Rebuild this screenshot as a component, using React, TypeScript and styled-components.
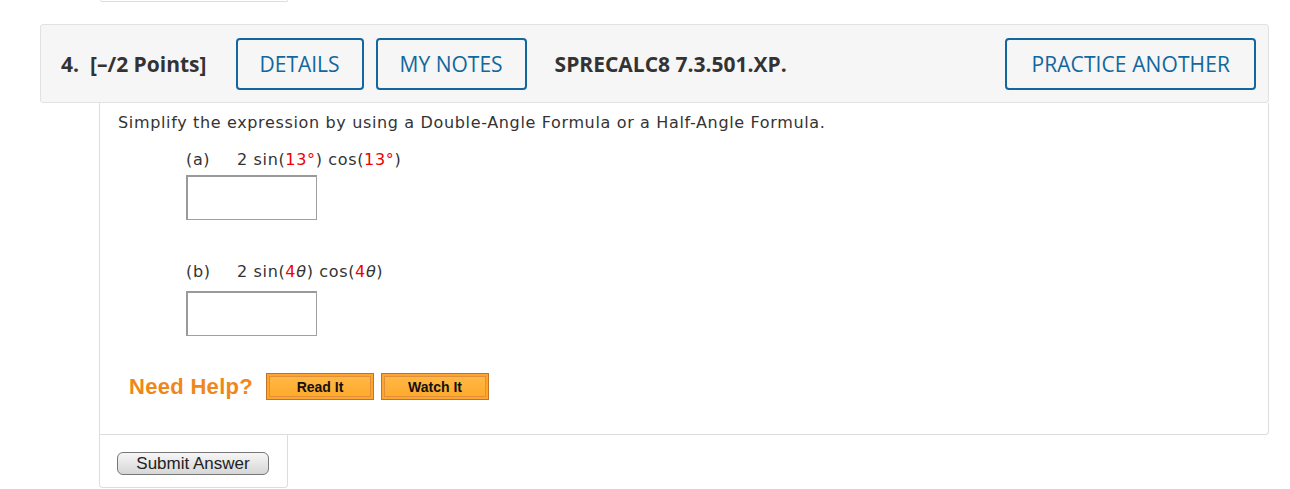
import styled, { createGlobalStyle } from "styled-components"

const Global = createGlobalStyle`
body {
  margin: 0;
  background: #ffffff;
}
`

const App = () => {
  return (
    <Page>
      <Global />
      <PrevTail />
      <Header>
        <Num>4.</Num>
        <Points>[–/2 Points]</Points>
        <OutlineButton first>DETAILS</OutlineButton>
        <OutlineButton>MY NOTES</OutlineButton>
        <Code>SPRECALC8 7.3.501.XP.</Code>
        <Spacer />
        <OutlineButton wide>PRACTICE ANOTHER</OutlineButton>
      </Header>
      <Body>
        <Prompt>Simplify the expression by using a Double-Angle Formula or a Half-Angle Formula.</Prompt>
        <Part>
          <PartRow>
            <Label>(a)</Label>
            <span>
              2 sin(<Red>13°</Red>) cos(<Red>13°</Red>)
            </span>
          </PartRow>
          <Answer gap={3} />
        </Part>
        <Part second>
          <PartRow>
            <Label>(b)</Label>
            <span>
              2 sin(<Red>4</Red><Theta>θ</Theta>) cos(<Red>4</Red><Theta>θ</Theta>)
            </span>
          </PartRow>
          <Answer gap={7} />
        </Part>
        <HelpRow>
          <NeedHelp>Need Help?</NeedHelp>
          <HelpButton>Read It</HelpButton>
          <HelpButton>Watch It</HelpButton>
        </HelpRow>
      </Body>
      <SubmitBox>
        <SubmitButton>Submit Answer</SubmitButton>
      </SubmitBox>
    </Page>
  )
}

export default App

const Page = styled.div`
width: 1229px;
padding-left: 40px;
padding-bottom: 1px;
display: flex;
flex-direction: column;
`
const PrevTail = styled.div`
width: 186px;
height: 1px;
margin-left: 60px;
border: 1px solid #dddddd;
border-top: none;
border-radius: 0 0 3px 3px;
`
const Header = styled.div`
margin-top: 22px;
height: 79px;
box-sizing: border-box;
background: #f6f6f6;
border: 1px solid #e2e2e2;
border-radius: 3px;
display: flex;
align-items: center;
padding: 0 12px 0 20px;
font-family: "Open Sans", sans-serif;
font-size: 21px;
color: #333333;
`
const Num = styled.div`
font-weight: 700;
`
const Points = styled.div`
font-weight: 700;
margin-left: 11px;
`
const Code = styled.div`
font-weight: 700;
margin-left: 28px;
`
const Spacer = styled.div`
flex: 1;
`
const OutlineButton = styled.div<{ first?: boolean; wide?: boolean }>`
height: 52px;
box-sizing: border-box;
padding: ${(p) => (p.wide ? "0 24px 0 24px" : "0 22px")};
border: 2px solid #12679e;
border-radius: 4px;
display: flex;
align-items: center;
color: #12679e;
font-weight: 400;
letter-spacing: ${(p) => (p.wide ? "0.1px" : "0")};
margin-left: ${(p) => (p.first ? "29px" : "12px")};
`
const Body = styled.div`
margin-left: 59px;
border: 1px solid #dddddd;
border-top: none;
border-radius: 0 0 4px 0;
padding: 8px 18px 34px 18px;
font-family: "DejaVu Sans", Verdana, sans-serif;
font-size: 16px;
letter-spacing: 0.65px;
color: #333333;
`
const Prompt = styled.div`
line-height: 24px;
`
const Part = styled.div<{ second?: boolean }>`
margin-left: 68px;
margin-top: ${(p) => (p.second ? "40px" : "13px")};
display: flex;
flex-direction: column;
align-items: flex-start;
`
const PartRow = styled.div`
display: flex;
line-height: 24px;
`
const Label = styled.span`
width: 51px;
`
const Red = styled.span`
color: #ee0000;
`
const Theta = styled.span`
font-style: italic;
`
const Answer = styled.div<{ gap: number }>`
margin-top: ${(p) => p.gap}px;
width: 131px;
height: 45px;
box-sizing: border-box;
background: #ffffff;
border: 1px solid #a0a0a0;
border-left: 2px solid #9a9a9a;
border-top: 2px solid #9a9a9a;
`
const HelpRow = styled.div`
margin-top: 37px;
margin-left: 11px;
display: flex;
align-items: center;
height: 27px;
letter-spacing: 0;
`
const NeedHelp = styled.div`
font-family: "Liberation Sans", Arial, sans-serif;
font-weight: 700;
font-size: 22px;
letter-spacing: 0.3px;
color: #f0871a;
margin-right: 13px;
`
const HelpButton = styled.div`
width: 108px;
height: 27px;
box-sizing: border-box;
border: 1px solid #c0742a;
background: linear-gradient(#ffba48, #ffa829);
box-shadow: inset 0 0 0 2px #ffa52c, inset 0 0 0 3px #e08f3a;
display: flex;
align-items: center;
justify-content: center;
font-family: "Liberation Sans", Arial, sans-serif;
font-weight: 700;
font-size: 14px;
color: #111111;
margin-right: 7px;
`
const SubmitBox = styled.div`
margin-left: 59px;
width: 189px;
height: 53px;
border: 1px solid #dddddd;
border-top: none;
border-radius: 0 0 4px 4px;
padding: 17px 0 0 17px;
box-sizing: border-box;
`
const SubmitButton = styled.div`
width: 152px;
height: 23px;
box-sizing: border-box;
border: 1px solid #777777;
border-radius: 6px;
background: linear-gradient(#f6f6f6, #d6d6d6);
display: flex;
align-items: center;
justify-content: center;
font-family: "Liberation Sans", Arial, sans-serif;
font-size: 17px;
color: #222222;
`
